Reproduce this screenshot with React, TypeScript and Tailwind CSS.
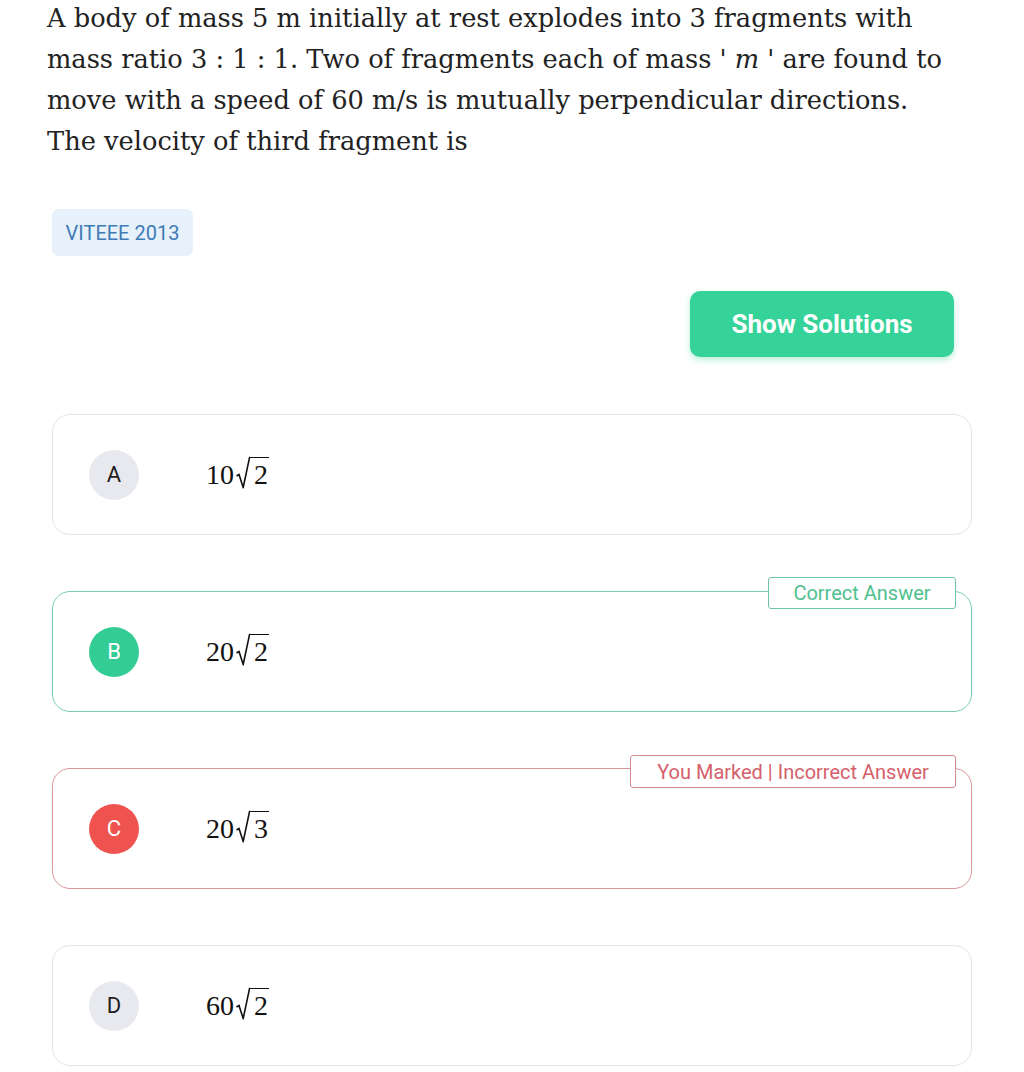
import React from 'react';

type Status = 'none' | 'correct' | 'wrong';

interface OptionItem {
  letter: string;
  lead: string;
  radicand: string;
  status: Status;
}

const options: OptionItem[] = [
  { letter: 'A', lead: '10', radicand: '2', status: 'none' },
  { letter: 'B', lead: '20', radicand: '2', status: 'correct' },
  { letter: 'C', lead: '20', radicand: '3', status: 'wrong' },
  { letter: 'D', lead: '60', radicand: '2', status: 'none' },
];

const serif = { fontFamily: '"DejaVu Serif", "Liberation Serif", serif' };
const mathFont = { fontFamily: '"Liberation Serif", "Times New Roman", serif' };
const sans = { fontFamily: 'Roboto, "Noto Sans", Arial, sans-serif' };

function Sqrt({ lead, radicand }: { lead: string; radicand: string }) {
  return (
    <span className="inline-flex items-end text-[28px] text-[#111]" style={mathFont}>
      <span className="leading-[22px]">{lead}</span>
      <svg width="14" height="32" viewBox="0 0 14 32" className="ml-[2px] block translate-y-[2.5px]">
        <path d="M0.5 19.5 L3 18 L7.2 31 L13.6 0.75 L14 0.75" fill="none" stroke="#111" strokeWidth="1.6" />
      </svg>
      <span className="border-t-[1.5px] border-[#111] pt-[6px] pl-[4px] pr-[1px] leading-[22px]">{radicand}</span>
    </span>
  );
}

function OptionCard({ item }: { item: OptionItem }) {
  const border =
    item.status === 'correct'
      ? 'border-[#7ccbb6]'
      : item.status === 'wrong'
        ? 'border-[#d8949a]'
        : 'border-[#e3e5e8]';
  const circle =
    item.status === 'correct'
      ? 'bg-[#33cc95] text-white'
      : item.status === 'wrong'
        ? 'bg-[#ef5350] text-white'
        : 'bg-[#e8e9ee] text-[#1f1f1f]';

  return (
    <div className={`relative h-[121px] rounded-[18px] border ${border} bg-white flex items-center pl-[36px]`}>
      <div
        className={`h-[50px] w-[50px] rounded-full flex items-center justify-center text-[22px] ${circle}`}
        style={sans}
      >
        {item.letter}
      </div>
      <div className="ml-[67px] flex items-center -translate-y-[5px]">
        <Sqrt lead={item.lead} radicand={item.radicand} />
      </div>
      {item.status === 'correct' && (
        <div
          className="absolute -top-[15px] right-[15px] h-[32px] w-[188px] bg-white border border-[#6fc3ad] rounded-[3px] flex items-center justify-center text-[20px] text-[#4fc08f]"
          style={sans}
        >
          Correct Answer
        </div>
      )}
      {item.status === 'wrong' && (
        <div
          className="absolute -top-[14px] right-[15px] h-[33px] w-[326px] bg-white border border-[#d08a91] rounded-[3px] flex items-center justify-center text-[20px] text-[#d5606c]"
          style={sans}
        >
          You Marked | Incorrect Answer
        </div>
      )}
    </div>
  );
}

export default function App() {
  return (
    <div className="min-h-[1072px] w-[1024px] bg-white px-[52px]">
      <div className="-mt-[2px] -ml-[5px] text-[25.7px] leading-[41px] text-[#222]" style={serif}>
        <div className="whitespace-nowrap">A body of mass 5 m initially at rest explodes into 3 fragments with</div>
        <div className="whitespace-nowrap">
          mass ratio 3 : 1 : 1. Two of fragments each of mass ' <i>m</i> ' are found to
        </div>
        <div className="whitespace-nowrap">move with a speed of 60 m/s is mutually perpendicular directions.</div>
        <div className="whitespace-nowrap">The velocity of third fragment is</div>
      </div>

      <div className="mt-[47px]">
        <span
          className="inline-flex h-[47px] w-[141px] items-center justify-center rounded-[7px] bg-[#e7f1fb] text-[20px] text-[#3f7bb5]"
          style={sans}
        >
          VITEEE 2013
        </span>
      </div>

      <div className="mt-[35px] flex justify-end pr-[18px]">
        <button
          className="h-[66px] w-[264px] rounded-[10px] bg-[#35d39a] text-[26px] font-bold text-white shadow-[0_3px_6px_rgba(52,211,153,0.35)]"
          style={sans}
        >
          Show Solutions
        </button>
      </div>

      <div className="mt-[57px] flex flex-col gap-[56px]">
        {options.map((o) => (
          <OptionCard key={o.letter} item={o} />
        ))}
      </div>
    </div>
  );
}
